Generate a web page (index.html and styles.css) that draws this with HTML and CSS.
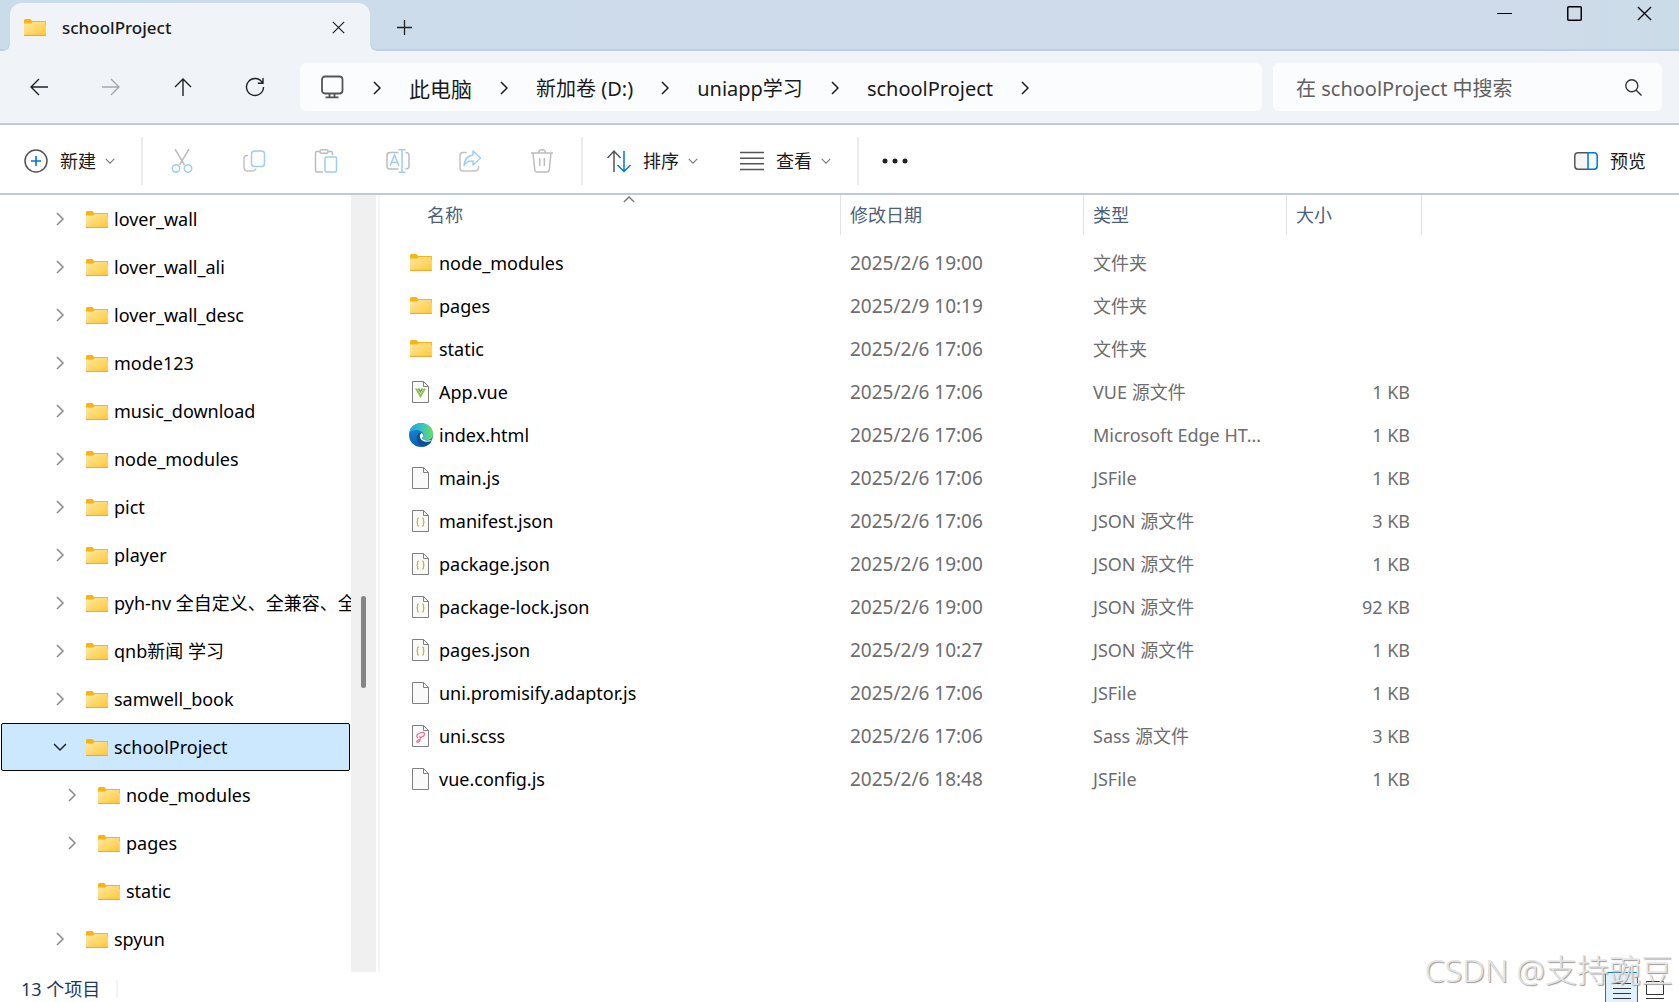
FILE: index.html
```html
<!DOCTYPE html>
<html lang="zh-CN">
<head>
<meta charset="utf-8">
<meta name="viewport" content="width=device-width, initial-scale=1">
<title>schoolProject</title>
<link rel="stylesheet" href="styles.css">
</head>
<body>
<svg class="sprite" aria-hidden="true">
  <defs>
    <linearGradient id="folderFill" x1="0" y1="0" x2="1" y2="1"><stop offset="0" stop-color="#ffe9a6"/><stop offset="1" stop-color="#ffc938"/></linearGradient>
    <linearGradient id="edgeTop" x1="0" y1="0" x2="1" y2="0"><stop offset="0" stop-color="#1fa5dc"/><stop offset=".5" stop-color="#35c1c8"/><stop offset="1" stop-color="#6ae05a"/></linearGradient>
    <linearGradient id="edgeLeft" x1="0" y1="0" x2="0" y2="1"><stop offset="0" stop-color="#1a8fe0"/><stop offset="1" stop-color="#0a5fae"/></linearGradient>
  </defs>
  <symbol id="folder" viewBox="0 0 22 17">
    <path d="M0 1.5Q0 0 1.5 0H6Q7 0 8 2H22V6H0Z" fill="#fbb40f"/>
    <path d="M0 4.5H7L9 3H21.500V16H0Z" fill="url(#folderFill)"/>
    <path d="M0 16.400H22" stroke="#e8a31d"/>
    <path d="M21.700 3V16" stroke="#f5bd3d" stroke-width=".6"/>
  </symbol>
  <symbol id="page" viewBox="0 0 17 22">
    <path d="M.5.5H11.500L16.500 5.500V21.500H.5Z" fill="#fafafa" stroke="#808080"/>
    <path d="M11.500.5V5.500H16.500" fill="none" stroke="#808080"/>
  </symbol>
  <symbol id="vue" viewBox="0 0 17 22">
    <use href="#page"/>
    <path d="M3 7.500H5.300L8.500 13L11.700 7.500H14L8.500 17Z" fill="#8dc149"/>
    <path d="M5.800 7.500H7.500L8.500 9.500L9.500 7.500H11.200L8.500 12Z" fill="#5f9a3d"/>
  </symbol>
  <symbol id="json" viewBox="0 0 17 22">
    <use href="#page"/>
    <path d="M7 8H6.500Q5.500 8 5.500 9V11Q5.500 12 4.500 12Q5.500 12 5.500 13V15Q5.500 16 6.500 16H7M10 8H10.500Q11.500 8 11.500 9V11Q11.500 12 12.500 12Q11.500 12 11.500 13V15Q11.500 16 10.500 16H10" fill="none" stroke="#b9b93c" stroke-width="1.200"/>
  </symbol>
  <symbol id="sass" viewBox="0 0 17 22">
    <use href="#page"/>
    <path d="M6 13Q3.500 11 6 9Q9 7 11.500 7.500Q13.500 8.500 11.500 11Q9.500 12.500 8 12Q9 14 7.500 16Q6 18 4.800 17Q4.500 15.500 7.500 14.500" fill="none" stroke="#ee6a9b" stroke-width="1.300"/>
  </symbol>
  <symbol id="edge" viewBox="0 0 24 24">
    <circle cx="12" cy="12" r="12" fill="url(#edgeLeft)"/>
    <path d="M.3 9.500C1.700 3.500 6.500 0 12 0C19 0 24 5 24 11C24 15 21 17.300 17.500 17.300C14.500 17.300 13 16.300 13 15.300C13 14.500 14.400 14 14.400 12C14.400 9.500 11.500 7 7.500 7C4.500 7 2 8 .3 9.500Z" fill="url(#edgeTop)"/>
    <path d="M9 11C5.500 16 9 23 15 23.600C18.500 22.800 21.500 20.500 22.400 18.200C18 20.500 11.500 18.500 11 14C10.800 12.500 11.500 11 12.500 10.200C11 9.500 10 10 9 11Z" fill="#104e96"/>
    <path d="M12.500 10Q10 12 11.300 15Q13 18.800 18 18.800Q21.500 18.800 23 16.500Q20.500 18 17 17.500Q13 16.800 13 15.300Q13 14.500 14.200 13.400Q14.600 11 12.500 10Z" fill="#fff"/>
  </symbol>
  <symbol id="right" viewBox="0 0 8 14"><path d="M1 1L7 7L1 13" fill="none" stroke="currentColor" stroke-width="1.500"/></symbol>
  <symbol id="down" viewBox="0 0 14 8"><path d="M1 1L7 7L13 1" fill="none" stroke="currentColor" stroke-width="1.500"/></symbol>
  <symbol id="close" viewBox="0 0 16 16"><path d="M1 1L15 15M15 1L1 15" fill="none" stroke="currentColor" stroke-width="1.400"/></symbol>
</svg>

<header class="titlebar">
  <div class="tab">
    <svg class="folder"><use href="#folder"/></svg>
    <span class="tab-name">schoolProject</span>
    <button class="tab-close" aria-label="关闭标签页"><svg width="13" height="13"><use href="#close"/></svg></button>
  </div>
  <button class="tab-new" aria-label="新建标签页"><svg width="15" height="15" viewBox="0 0 15 15"><path d="M7.500 0V15M0 7.500H15" stroke="#222" stroke-width="1.300"/></svg></button>
  <div class="window-controls">
    <button aria-label="最小化"><svg width="15" height="15" viewBox="0 0 15 15"><path d="M0 7.500H15" stroke="#000"/></svg></button>
    <button aria-label="最大化"><svg width="15" height="15" viewBox="0 0 15 15"><rect x=".75" y=".75" width="13.500" height="13.500" rx="1" fill="none" stroke="#000" stroke-width="1.500"/></svg></button>
    <button aria-label="关闭"><svg width="15" height="15"><use href="#close"/></svg></button>
  </div>
</header>

<div class="navbar">
  <div class="nav-buttons">
    <button aria-label="后退"><svg width="18" height="18" viewBox="0 0 18 18"><path d="M18 9H1M9 1L1 9L9 17" fill="none" stroke="#222" stroke-width="1.400"/></svg></button>
    <button aria-label="前进" disabled><svg width="18" height="18" viewBox="0 0 18 18"><path d="M0 9H17M9 1L17 9L9 17" fill="none" stroke="#a3a8ac" stroke-width="1.400"/></svg></button>
    <button aria-label="向上"><svg width="18" height="18" viewBox="0 0 18 18"><path d="M9 18V1M1 9L9 1L17 9" fill="none" stroke="#222" stroke-width="1.400"/></svg></button>
    <button aria-label="刷新"><svg width="20" height="20" viewBox="0 0 20 20"><path d="M17.500 6A8.500 8.500 0 1 0 18.500 10M18 1V6.300H12.800" fill="none" stroke="#222" stroke-width="1.400"/></svg></button>
  </div>
  <nav class="address" aria-label="地址">
    <svg width="24" height="24" viewBox="0 0 24 24" fill="none" stroke="#555" stroke-width="1.800"><rect x="1" y="1.500" width="20.500" height="17" rx="3"/><path d="M8.500 18.500V22M13.500 18.500V22M4.500 22.300H17.500"/></svg>
    <svg class="crumb-sep"><use href="#right"/></svg>
    <a class="crumb-cjk" href="#pc">此电脑</a>
    <svg class="crumb-sep"><use href="#right"/></svg>
    <a href="#d">新加卷 (D:)</a>
    <svg class="crumb-sep"><use href="#right"/></svg>
    <a href="#uniapp">uniapp学习</a>
    <svg class="crumb-sep"><use href="#right"/></svg>
    <a href="#school">schoolProject</a>
    <svg class="crumb-sep"><use href="#right"/></svg>
  </nav>
  <form class="search">
    <input type="text" aria-label="搜索" placeholder="在 schoolProject 中搜索">
    <button type="button" aria-label="开始搜索"><svg width="17" height="17" viewBox="0 0 17 17" fill="none" stroke="#333" stroke-width="1.400"><circle cx="6.800" cy="6.800" r="6"/><path d="M11 11L16.500 16.500"/></svg></button>
  </form>
</div>

<div class="toolbar">
  <button class="tool-new">
    <svg width="24" height="24" viewBox="0 0 24 24" fill="none"><circle cx="12" cy="12" r="11" stroke="#555" stroke-width="1.500"/><path d="M12 7V17M7 12H17" stroke="#0078d4" stroke-width="1.600"/></svg>
    新建
    <svg class="caret"><use href="#down"/></svg>
  </button>
  <div class="tool-group">
    <button disabled aria-label="剪切"><svg width="24" height="24" viewBox="0 0 24 24" fill="none" stroke-width="1.500"><path d="M5 0L14.500 16M19 0L9.500 16" stroke="#bdbdbd"/><circle cx="6" cy="19.500" r="3.700" stroke="#9fcdf0"/><circle cx="18" cy="19.500" r="3.700" stroke="#9fcdf0"/></svg></button>
    <button disabled aria-label="复制"><svg width="24" height="24" viewBox="0 0 24 24" fill="none" stroke-width="1.500"><path d="M6 6.500H5Q2 6.500 2 9.500V18.500Q2 22 5.500 22H10Q13 22 14 19.500" stroke="#c4c4c4"/><rect x="9.500" y="2" width="13" height="15.500" rx="3" stroke="#9fcdf0"/></svg></button>
    <button disabled aria-label="粘贴"><svg width="24" height="24" viewBox="0 0 24 24" fill="none" stroke-width="1.500"><path d="M6 2.500H3Q1.500 2.500 1.500 4V21.500Q1.500 23 3 23H9M14 2.500H17Q18.500 2.500 18.500 4V6" stroke="#bdbdbd"/><rect x="6" y=".8" width="8" height="3.400" rx="1.500" stroke="#bdbdbd"/><rect x="11" y="8" width="11.500" height="15" rx="1.500" stroke="#9fcdf0"/></svg></button>
    <button disabled aria-label="重命名"><svg width="24" height="24" viewBox="0 0 24 24" fill="none" stroke-width="1.500"><path d="M12.500 3.500H4Q1 3.500 1 6.500V17Q1 20 4 20H12.500M19.500 3.500Q23 3.500 23 6.500V17Q23 20 19.500 20" stroke="#bdbdbd"/><path d="M4 17L8.500 6L13 17M5.500 13.500H11.500M12.500.8H19.500M12.500 23.200H19.500M16 .8V23.200" stroke="#9fcdf0"/></svg></button>
    <button disabled aria-label="共享"><svg width="24" height="24" viewBox="0 0 24 24" fill="none" stroke-width="1.500" stroke-linejoin="round"><path d="M9 3.500H5Q2 3.500 2 6.500V19Q2 22 5 22H17Q20.500 22 20.500 18.500V17" stroke="#c4c4c4"/><path d="M15 2L22.500 9L15 16V12Q9 11.500 6 16.500Q7 7 15 6Z" stroke="#9fcdf0"/></svg></button>
    <button disabled aria-label="删除"><svg width="24" height="24" viewBox="0 0 24 24" fill="none" stroke="#bdbdbd" stroke-width="1.500"><path d="M1 4H23M8.500 4Q8.500 .8 12 .8Q15.500 .8 15.500 4M3 4L4.800 21Q5 23 7 23H17Q19 23 19.200 21L21 4M9.700 9V17M14.300 9V17"/></svg></button>
  </div>
  <div class="tool-menus">
    <button>
      <svg width="24" height="24" viewBox="0 0 24 24" fill="none" stroke-width="1.500"><path d="M7 23V2M.5 9L7 2L13.500 9" stroke="#555"/><path d="M17 2V22.500M10.500 16L17 22.500L23.500 16" stroke="#0078d4"/></svg>
      排序
      <svg class="caret"><use href="#down"/></svg>
    </button>
    <button>
      <svg width="24" height="20" viewBox="0 0 24 20"><path d="M0 1.500H24M0 7.200H24M0 12.800H24M0 18.500H24" stroke="#555" stroke-width="1.400"/></svg>
      查看
      <svg class="caret"><use href="#down"/></svg>
    </button>
  </div>
  <button class="tool-more" aria-label="更多"><svg width="26" height="6" viewBox="0 0 26 6" fill="#222"><circle cx="3" cy="3" r="2.500"/><circle cx="13" cy="3" r="2.500"/><circle cx="23" cy="3" r="2.500"/></svg></button>
  <button class="tool-preview">
    <svg width="24" height="18" viewBox="0 0 24 18" stroke-width="1.500"><path d="M14 .8H4Q.8 .8 .8 4V14Q.8 17.200 4 17.200H14" fill="#f5f5f5" stroke="#555"/><path d="M14 .8H20Q23.200 .8 23.200 4V14Q23.200 17.200 20 17.200H14Z" fill="#f3faff" stroke="#0078d4"/></svg>
    预览
  </button>
</div>

<div class="content">
  <nav class="tree" aria-label="文件夹树">
    <ul>
      <li><a href="#t1"><svg class="chev"><use href="#right"/></svg><svg class="folder"><use href="#folder"/></svg>lover_wall</a></li>
      <li><a href="#t2"><svg class="chev"><use href="#right"/></svg><svg class="folder"><use href="#folder"/></svg>lover_wall_ali</a></li>
      <li><a href="#t3"><svg class="chev"><use href="#right"/></svg><svg class="folder"><use href="#folder"/></svg>lover_wall_desc</a></li>
      <li><a href="#t4"><svg class="chev"><use href="#right"/></svg><svg class="folder"><use href="#folder"/></svg>mode123</a></li>
      <li><a href="#t5"><svg class="chev"><use href="#right"/></svg><svg class="folder"><use href="#folder"/></svg>music_download</a></li>
      <li><a href="#t6"><svg class="chev"><use href="#right"/></svg><svg class="folder"><use href="#folder"/></svg>node_modules</a></li>
      <li><a href="#t7"><svg class="chev"><use href="#right"/></svg><svg class="folder"><use href="#folder"/></svg>pict</a></li>
      <li><a href="#t8"><svg class="chev"><use href="#right"/></svg><svg class="folder"><use href="#folder"/></svg>player</a></li>
      <li><a href="#t9"><svg class="chev"><use href="#right"/></svg><svg class="folder"><use href="#folder"/></svg>pyh-nv 全自定义、全兼容、全</a></li>
      <li><a href="#t10"><svg class="chev"><use href="#right"/></svg><svg class="folder"><use href="#folder"/></svg>qnb新闻 学习</a></li>
      <li><a href="#t11"><svg class="chev"><use href="#right"/></svg><svg class="folder"><use href="#folder"/></svg>samwell_book</a></li>
      <li><a class="selected" href="#t12"><svg class="chev"><use href="#down"/></svg><svg class="folder"><use href="#folder"/></svg>schoolProject</a>
        <ul class="children">
          <li><a href="#t13"><svg class="chev"><use href="#right"/></svg><svg class="folder"><use href="#folder"/></svg>node_modules</a></li>
          <li><a href="#t14"><svg class="chev"><use href="#right"/></svg><svg class="folder"><use href="#folder"/></svg>pages</a></li>
          <li><a href="#t15"><svg class="chev"></svg><svg class="folder"><use href="#folder"/></svg>static</a></li>
        </ul>
      </li>
      <li><a href="#t16"><svg class="chev"><use href="#right"/></svg><svg class="folder"><use href="#folder"/></svg>spyun</a></li>
    </ul>
  </nav>
  <div class="scrollbar"><div class="thumb"></div></div>
  <main class="files">
    <table>
      <colgroup><col class="col-name"><col class="col-date"><col class="col-type"><col class="col-size"></colgroup>
      <thead>
        <tr><th>名称<svg class="sort-mark" width="12" height="7"><use href="#down" transform="rotate(180 6 3.500)"/></svg></th><th>修改日期</th><th>类型</th><th>大小</th></tr>
      </thead>
      <tbody>
        <tr><td><span class="name"><span class="icon"><svg class="folder"><use href="#folder"/></svg></span>node_modules</span></td><td>2025/2/6 19:00</td><td>文件夹</td><td></td></tr>
        <tr><td><span class="name"><span class="icon"><svg class="folder"><use href="#folder"/></svg></span>pages</span></td><td>2025/2/9 10:19</td><td>文件夹</td><td></td></tr>
        <tr><td><span class="name"><span class="icon"><svg class="folder"><use href="#folder"/></svg></span>static</span></td><td>2025/2/6 17:06</td><td>文件夹</td><td></td></tr>
        <tr><td><span class="name"><span class="icon"><svg class="page"><use href="#vue"/></svg></span>App.vue</span></td><td>2025/2/6 17:06</td><td>VUE 源文件</td><td>1 KB</td></tr>
        <tr><td><span class="name"><span class="icon"><svg width="24" height="24"><use href="#edge"/></svg></span>index.html</span></td><td>2025/2/6 17:06</td><td>Microsoft Edge HT...</td><td>1 KB</td></tr>
        <tr><td><span class="name"><span class="icon"><svg class="page"><use href="#page"/></svg></span>main.js</span></td><td>2025/2/6 17:06</td><td>JSFile</td><td>1 KB</td></tr>
        <tr><td><span class="name"><span class="icon"><svg class="page"><use href="#json"/></svg></span>manifest.json</span></td><td>2025/2/6 17:06</td><td>JSON 源文件</td><td>3 KB</td></tr>
        <tr><td><span class="name"><span class="icon"><svg class="page"><use href="#json"/></svg></span>package.json</span></td><td>2025/2/6 19:00</td><td>JSON 源文件</td><td>1 KB</td></tr>
        <tr><td><span class="name"><span class="icon"><svg class="page"><use href="#json"/></svg></span>package-lock.json</span></td><td>2025/2/6 19:00</td><td>JSON 源文件</td><td>92 KB</td></tr>
        <tr><td><span class="name"><span class="icon"><svg class="page"><use href="#json"/></svg></span>pages.json</span></td><td>2025/2/9 10:27</td><td>JSON 源文件</td><td>1 KB</td></tr>
        <tr><td><span class="name"><span class="icon"><svg class="page"><use href="#page"/></svg></span>uni.promisify.adaptor.js</span></td><td>2025/2/6 17:06</td><td>JSFile</td><td>1 KB</td></tr>
        <tr><td><span class="name"><span class="icon"><svg class="page"><use href="#sass"/></svg></span>uni.scss</span></td><td>2025/2/6 17:06</td><td>Sass 源文件</td><td>3 KB</td></tr>
        <tr><td><span class="name"><span class="icon"><svg class="page"><use href="#page"/></svg></span>vue.config.js</span></td><td>2025/2/6 18:48</td><td>JSFile</td><td>1 KB</td></tr>
      </tbody>
    </table>
  </main>
</div>

<footer class="statusbar">
  <span class="count">13 个项目</span>
  <div class="view-switch">
    <button class="active" aria-label="详细信息"><svg width="18" height="18" viewBox="0 0 18 18"><path d="M0 1.500H18M0 6.500H18M0 11.500H18M0 16.500H18" stroke="#333"/></svg></button>
    <button aria-label="大图标"><svg width="18" height="18" viewBox="0 0 18 18" fill="none" stroke="#333"><path d="M.5.5H17.500V13.500H.5ZM0 17.500H18"/></svg></button>
  </div>
</footer>
<div class="watermark">CSDN @支持豌豆</div>
</body>
</html>
```
FILE: styles.css
```css
* { box-sizing: border-box; }

body {
  position: relative;
  display: flex;
  flex-direction: column;
  min-height: 100vh;
  margin: 0;
  overflow: hidden;
  background: #fff;
  color: #000;
  font: 18px/24px "Noto Sans", "Noto Sans CJK SC", sans-serif;
}

button {
  display: flex;
  align-items: center;
  justify-content: center;
  padding: 0;
  border: 0;
  background: none;
  color: #1a1a1a;
  font: inherit;
  white-space: nowrap;
}

a { color: inherit; text-decoration: none; }
ul { margin: 0; padding: 0; list-style: none; }
svg { flex: none; display: block; }

.sprite { position: absolute; width: 0; height: 0; }
.folder { width: 22px; height: 17px; }
.page { width: 17px; height: 22px; }
.caret { width: 10px; height: 6px; color: #777; }

/* title bar */
.titlebar {
  display: flex;
  height: 51px;
  padding-left: 10px;
  border-bottom: 2px solid #bfcfdf;
  background: linear-gradient(90deg, #cadcea, #cfdbea 60%, #cfdbea 92%, #cadce8);
}

.tab {
  position: relative;
  display: flex;
  align-items: center;
  width: 360px;
  margin: 3px 0 -2px;
  padding: 0 16px 0 14px;
  border-radius: 12px 12px 0 0;
  background: #f0f4f8;
}

.tab::before,
.tab::after {
  content: "";
  position: absolute;
  bottom: 0;
  width: 6px;
  height: 6px;
}

.tab::before { left: -6px; background: radial-gradient(circle at 0 0, #cadcea 4px, #bfcfdf 5px, #f0f4f8 6px); }
.tab::after { right: -6px; background: radial-gradient(circle at 100% 0, #cadcea 4px, #bfcfdf 5px, #f0f4f8 6px); }
.tab-name { flex: 1; margin-left: 16px; padding-top: 2px; font-size: 17px; font-weight: 500; color: #1a1a1a; }
.tab-close { width: 32px; height: 32px; }
.tab-new { width: 32px; height: 32px; margin: 11px 0 0 18px; }

.window-controls { display: flex; margin-left: auto; }
.window-controls button { width: 70px; height: 27px; color: #000; }

/* navigation row */
.navbar {
  display: flex;
  align-items: center;
  height: 74px;
  border-bottom: 2px solid #bccbda;
  background: #f0f4f8;
}

.nav-buttons { display: flex; gap: 32px; padding: 0 25px 0 19px; }
.nav-buttons button { width: 40px; height: 40px; }

.address,
.search {
  display: flex;
  align-items: center;
  height: 48px;
  border-radius: 6px;
  background: #fbfcfe;
}

.address {
  flex: 1;
  gap: 28px;
  padding-left: 21px;
  color: #1a1a1a;
  font-size: 20px;
}

.address a { padding-top: 3px; white-space: nowrap; }
.address .crumb-cjk { font-size: 21px; }
.crumb-sep { width: 8px; height: 14px; margin-top: 2px; }
.search { width: 389px; margin: 0 17px 0 11px; padding: 0 13px 0 23px; }
.search button { width: 32px; height: 32px; }

.search input {
  flex: 1;
  min-width: 0;
  padding: 4px 0 0;
  border: 0;
  outline: 0;
  background: none;
  color: #1a1a1a;
  font: inherit;
  font-size: 20px;
}

.search input::placeholder { color: #606060; opacity: 1; }

/* command bar */
.toolbar {
  display: flex;
  align-items: center;
  height: 70px;
  padding-top: 3px;
  border-bottom: 2px solid #bccbda;
}

.toolbar button { gap: 12px; height: 48px; }
.toolbar .caret { margin-left: -3px; }
.toolbar .tool-new { width: 143px; padding-left: 24px; border-right: 2px solid #ebebeb; justify-content: flex-start; }
.tool-group { display: flex; gap: 32px; padding: 0 19px; border-right: 2px solid #ebebeb; }
.tool-group button { width: 40px; }
.tool-menus { display: flex; gap: 42px; padding: 0 26px 0 24px; border-right: 2px solid #ebebeb; }
.toolbar .tool-more { width: 72px; }
.toolbar .tool-preview { margin-left: auto; margin-right: 33px; }

/* body */
.content { display: flex; flex: 1; }

.tree { width: 351px; padding-bottom: 9px; overflow: hidden; }

.tree a {
  display: flex;
  align-items: center;
  height: 48px;
  margin: 0 1px;
  padding-left: 51px;
  border: 1px solid transparent;
  border-radius: 2px;
  white-space: nowrap;
}

.tree .chev { width: 14px; height: 14px; margin-right: 19px; color: #8a8a8a; }
.tree .folder { margin-right: 6px; }
.tree .children a { padding-left: 63px; }
.tree .selected { border-color: #000; background: #cce8ff; }
.tree .selected .chev { color: #222; }

.scrollbar { width: 25px; padding-top: 401px; background: #f0f0f0; }
.thumb { width: 5px; height: 92px; margin-left: 10px; border-radius: 3px; background: #858585; }

.files { flex: 1; margin-left: 2px; border-left: 2px solid #f5f5f5; }

table { width: 1042px; border-collapse: separate; border-spacing: 0; table-layout: fixed; }
.col-name { width: 461px; }
.col-date { width: 243px; }
.col-type { width: 203px; }
.col-size { width: 135px; }

th {
  position: relative;
  height: 40px;
  padding: 0 0 0 9px;
  border-right: 1px solid #e2e2e2;
  color: #4c607a;
  font-weight: 400;
  text-align: left;
}

th:first-child { padding-left: 47px; }
.sort-mark { position: absolute; top: 1px; left: 243px; color: #777; }

tbody::before { content: ""; display: block; height: 6px; }
td { height: 43px; padding: 0 0 0 9px; color: #6d6d6d; white-space: nowrap; }
td:first-child { padding-left: 28px; color: #000; }
td:nth-child(2) { font-size: 19px; }
td:last-child { padding: 0 12px 0 0; text-align: right; }
.name { display: flex; align-items: center; gap: 6px; }
.icon { display: flex; justify-content: center; width: 25px; }

/* status bar */
.statusbar { display: flex; align-items: center; height: 30px; padding-left: 21px; color: #1e395b; }
.count { margin-top: 4px; padding-right: 16px; border-right: 2px solid #f3f3f3; line-height: 18px; }
.view-switch { display: flex; align-self: stretch; margin-left: auto; padding-right: 8px; }
.view-switch button { width: 33px; padding-top: 6px; overflow: hidden; }
.view-switch .active { border: solid #0078d4; border-width: 1px 1px 0; background: #e0f1fb; }

.watermark {
  position: absolute;
  right: 6px;
  bottom: 10px;
  color: #e3e3e3;
  font-size: 32px;
  font-weight: 300;
  line-height: 44px;
  text-shadow: 1px 1px 1px #999;
  pointer-events: none;
}
```
